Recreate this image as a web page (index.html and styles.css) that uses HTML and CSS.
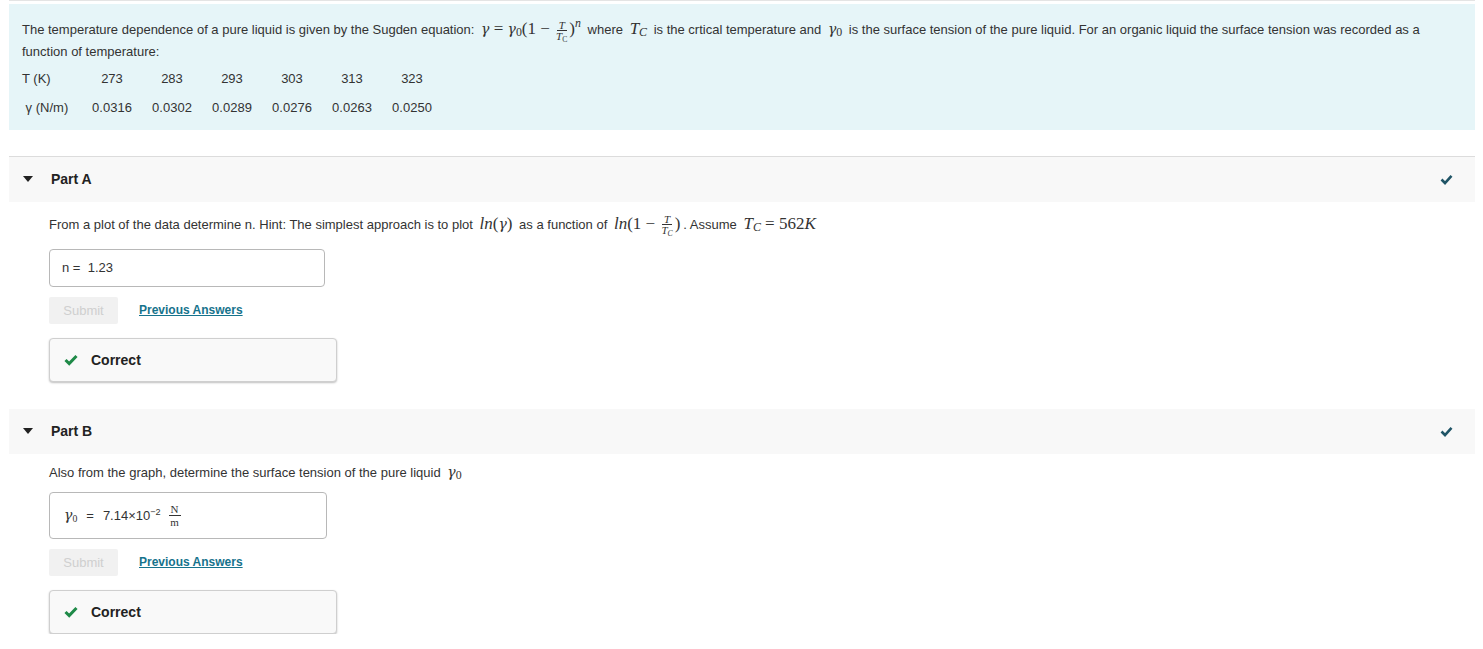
FILE: index.html
```html
<!DOCTYPE html>
<html lang="en">
<head>
    <meta charset="UTF-8">
    <title>Sugden equation</title>
    <link rel="stylesheet" href="styles.css">
</head>
<body>
    <main class="page">
        <section class="intro">
            <p class="intro-text">The temperature dependence of a pure liquid is given by the Sugden equation:
                <span class="math"><i class="g">γ</i> = <i class="g">γ</i><sub>0</sub>(1 − <span class="frac"><span class="num"><i>T</i></span><span class="den"><i>T</i><sub>C</sub></span></span>)<sup><i>n</i></sup></span>
                where <span class="math"><i>T</i><sub><i>C</i></sub></span> is the crtical temperature and <span class="math"><i class="g">γ</i><sub>0</sub></span> is the surface tension of the pure liquid. For an organic liquid the surface tension was recorded as a function of temperature:</p>
            <table class="data">
                <tr>
                    <td class="head">T (K)</td>
                    <td>273</td><td>283</td><td>293</td><td>303</td><td>313</td><td>323</td>
                </tr>
                <tr>
                    <td class="head">&nbsp;γ (N/m)</td>
                    <td>0.0316</td><td>0.0302</td><td>0.0289</td><td>0.0276</td><td>0.0263</td><td>0.0250</td>
                </tr>
            </table>
        </section>

        <section class="part first">
            <div class="part-head">
                <span class="caret"></span>
                <h2>Part A</h2>
                <svg class="done" width="13" height="11" viewBox="0 0 13 11"><path d="M1.5 5.5 L5 9 L11.5 1.8" fill="none" stroke="#1f5466" stroke-width="2.6"/></svg>
            </div>
            <div class="part-body">
                <p class="question tall-line">From a plot of the data determine n. Hint: The simplest approach is to plot
                    <span class="math big"><i>ln</i>(<i class="g">γ</i>)</span> as a function of
                    <span class="math big"><i>ln</i>(1 − <span class="frac"><span class="num"><i>T</i></span><span class="den"><i>T</i><sub><i>C</i></sub></span></span>)</span>. Assume
                    <span class="math big"><i>T</i><sub><i>C</i></sub> = 562<i>K</i></span></p>
                <div class="answer">n = &nbsp;1.23</div>
                <div class="actions">
                    <button class="submit" disabled>Submit</button>
                    <a href="#" class="prev">Previous Answers</a>
                </div>
                <div class="feedback">
                    <svg width="14" height="12" viewBox="0 0 14 12"><path d="M1.5 6 L5.2 9.6 L12.5 2" fill="none" stroke="#1f8a48" stroke-width="3"/></svg>
                    <span>Correct</span>
                </div>
            </div>
        </section>

        <section class="part">
            <div class="part-head">
                <span class="caret"></span>
                <h2>Part B</h2>
                <svg class="done" width="13" height="11" viewBox="0 0 13 11"><path d="M1.5 5.5 L5 9 L11.5 1.8" fill="none" stroke="#1f5466" stroke-width="2.6"/></svg>
            </div>
            <div class="part-body">
                <p class="question">Also from the graph, determine the surface tension of the pure liquid
                    <span class="math"><i class="g">γ</i><sub>0</sub></span></p>
                <div class="answer tall">
                    <span class="math"><i class="g">γ</i><sub>0</sub></span>
                    <span class="eq">=</span>
                    <span>7.14×10<sup>−2</sup></span>
                    <span class="frac unit"><span class="num">N</span><span class="den">m</span></span>
                </div>
                <div class="actions">
                    <button class="submit" disabled>Submit</button>
                    <a href="#" class="prev">Previous Answers</a>
                </div>
                <div class="feedback">
                    <svg width="14" height="12" viewBox="0 0 14 12"><path d="M1.5 6 L5.2 9.6 L12.5 2" fill="none" stroke="#1f8a48" stroke-width="3"/></svg>
                    <span>Correct</span>
                </div>
            </div>
        </section>
    </main>
</body>
</html>
```

FILE: styles.css
```css
body {
    margin: 0;
    font-family: "Liberation Sans", Arial, sans-serif;
    font-size: 13px;
    color: #333;
    background: #fff;
}

.page {
    margin: 0 8px 0 9px;
    padding-top: 3px;
    border-top: 1px solid #e4e4e4;
}

.intro {
    background-color: #e6f5f8;
    padding: 14px 30px 8px 13px;
}

.intro-text {
    margin: 0;
    line-height: 21px;
}

.math {
    font-family: "Liberation Serif", "Times New Roman", serif;
    font-size: 17px;
    white-space: nowrap;
    margin: 0 3px;
}

.math .g {
    font-family: "DejaVu Serif", serif;
    font-size: 14px;
}

.math.big {
    font-size: 17px;
}

.math sub {
    font-size: 70%;
    vertical-align: -2px;
    line-height: 0;
}

.math sup {
    font-size: 70%;
    vertical-align: 7px;
    line-height: 0;
}

.frac {
    display: inline-flex;
    flex-direction: column;
    align-items: center;
    vertical-align: middle;
    font-size: 11px;
    line-height: 10px;
    margin: 0 2px;
}

.frac .num {
    border-bottom: 1px solid #333;
    padding: 0 2px;
}

.data {
    border-collapse: collapse;
    margin-top: 2px;
}

.data td {
    height: 29px;
    padding: 0;
    text-align: center;
    width: 60px;
}

.data td.head {
    text-align: left;
    width: 60px;
}

.part {
    margin-top: 27px;
}

.part.first {
    margin-top: 26px;
    border-top: 1px solid #dcdcdc;
}

.part-head {
    display: flex;
    align-items: center;
    height: 45px;
    background-color: #f8f8f8;
    padding: 0 22px 0 14px;
}

.caret {
    width: 0;
    height: 0;
    border-left: 5px solid transparent;
    border-right: 5px solid transparent;
    border-top: 6px solid #222;
    margin-right: 18px;
}

.part-head h2 {
    margin: 0;
    font-size: 14px;
    font-weight: bold;
    color: #222;
    flex: 1;
}

.part-body {
    padding: 9px 40px 0 40px;
}

.question {
    margin: 0 0 10px 0;
    line-height: 18px;
}

.question.tall-line {
    line-height: 26px;
    margin-bottom: 11px;
}

.answer {
    width: 250px;
    height: 36px;
    border: 1px solid #b8b8b8;
    border-radius: 4px;
    padding: 0 12px;
    display: flex;
    align-items: center;
    gap: 6px;
    font-size: 13px;
}

.answer.tall {
    height: 45px;
    padding-left: 14px;
    gap: 8px;
}

.answer .math {
    font-size: 14px;
    margin: 0;
}

.answer sup {
    font-size: 70%;
    vertical-align: 5px;
}

.eq {
    margin: 0 1px;
}

.frac.unit {
    font-family: "Liberation Serif", "Times New Roman", serif;
    font-size: 11px;
    line-height: 12px;
    margin-left: 0;
}

.actions {
    display: flex;
    align-items: center;
    gap: 21px;
    margin-top: 10px;
}

.submit {
    width: 69px;
    height: 27px;
    border: none;
    border-radius: 2px;
    background-color: #f1f1f1;
    color: #cfcfcf;
    font-family: "Liberation Sans", Arial, sans-serif;
    font-size: 13px;
}

.prev {
    color: #16738c;
    font-weight: bold;
    font-size: 12px;
}

.feedback {
    display: flex;
    align-items: center;
    gap: 13px;
    width: 272px;
    height: 42px;
    margin-top: 14px;
    padding-left: 14px;
    background-color: #f9f9f9;
    border: 1px solid #cfcfcf;
    border-radius: 4px;
    box-shadow: 0 1px 2px rgba(0, 0, 0, 0.25);
    font-size: 14px;
    font-weight: bold;
    color: #222;
}
```
